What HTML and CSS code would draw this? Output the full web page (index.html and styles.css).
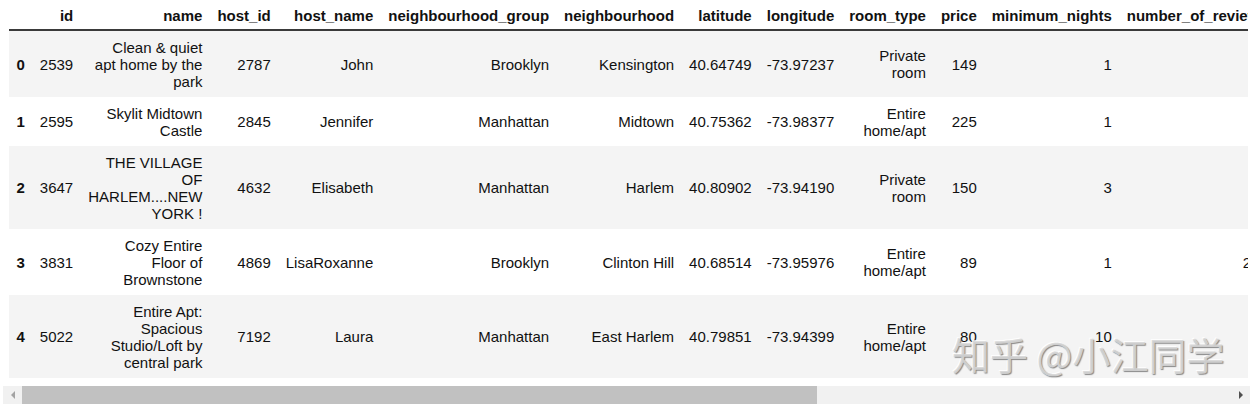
FILE: index.html
```html
<!DOCTYPE html>
<html>
<head>
<meta charset="utf-8">
<link rel="stylesheet" href="styles.css">
</head>
<body>
<div class="output">
  <div class="scroller">
    <table class="dataframe">
      <thead>
        <tr>
          <th></th><th>id</th><th>name</th><th>host_id</th><th>host_name</th><th>neighbourhood_group</th><th>neighbourhood</th><th>latitude</th><th>longitude</th><th>room_type</th><th>price</th><th>minimum_nights</th><th>number_of_reviews</th><th>last_review</th><th>reviews_per_month</th><th>calculated_host_listings_count</th><th>availability_365</th>
        </tr>
      </thead>
      <tbody>
        <tr>
          <th>0</th><td>2539</td><td>Clean &amp; quiet apt home by the park</td><td>2787</td><td>John</td><td>Brooklyn</td><td>Kensington</td><td>40.64749</td><td>-73.97237</td><td>Private room</td><td>149</td><td>1</td><td>9</td><td>2018-10-19</td><td>0.21</td><td>6</td><td>365</td>
        </tr>
        <tr>
          <th>1</th><td>2595</td><td>Skylit Midtown Castle</td><td>2845</td><td>Jennifer</td><td>Manhattan</td><td>Midtown</td><td>40.75362</td><td>-73.98377</td><td>Entire home/apt</td><td>225</td><td>1</td><td>45</td><td>2019-05-21</td><td>0.38</td><td>2</td><td>355</td>
        </tr>
        <tr>
          <th>2</th><td>3647</td><td>THE VILLAGE OF HARLEM....NEW YORK !</td><td>4632</td><td>Elisabeth</td><td>Manhattan</td><td>Harlem</td><td>40.80902</td><td>-73.94190</td><td>Private room</td><td>150</td><td>3</td><td>0</td><td>NaN</td><td>NaN</td><td>1</td><td>365</td>
        </tr>
        <tr>
          <th>3</th><td>3831</td><td>Cozy Entire Floor of Brownstone</td><td>4869</td><td>LisaRoxanne</td><td>Brooklyn</td><td>Clinton Hill</td><td>40.68514</td><td>-73.95976</td><td>Entire home/apt</td><td>89</td><td>1</td><td>270</td><td>2019-07-05</td><td>4.64</td><td>1</td><td>194</td>
        </tr>
        <tr>
          <th>4</th><td>5022</td><td>Entire Apt: Spacious Studio/Loft by central park</td><td>7192</td><td>Laura</td><td>Manhattan</td><td>East Harlem</td><td>40.79851</td><td>-73.94399</td><td>Entire home/apt</td><td>80</td><td>10</td><td>9</td><td>2018-11-19</td><td>0.10</td><td>1</td><td>0</td>
        </tr>
      </tbody>
    </table>
  </div>
  <div class="hscroll">
    <div class="arrow-btn left"><span class="tri-left"></span></div>
    <div class="thumb"></div>
    <div class="track"></div>
    <div class="arrow-btn right"><span class="tri-right"></span></div>
  </div>
</div>
<div class="watermark">知乎 @小江同学</div>
</body>
</html>
```

FILE: styles.css
```css
html, body {
  margin: 0;
  padding: 0;
  background: #ffffff;
}

body {
  font-family: "Liberation Sans", Arial, sans-serif;
  color: #000;
  position: relative;
  width: 1255px;
  height: 408px;
  overflow: hidden;
}

.output {
  display: flex;
  flex-direction: column;
  gap: 8px;
  width: 1250px;
}

.scroller {
  margin-left: 9px;
  width: 1239px;
  overflow: hidden;
}

.dataframe {
  border-collapse: collapse;
  border-spacing: 0;
  font-size: 15px;
  line-height: normal;
  color: #111;
}

.dataframe thead {
  border-bottom: 2px solid #3a3a3a;
}

.dataframe th,
.dataframe td {
  text-align: right;
  vertical-align: middle;
  padding: 7.5px 7.5px;
  white-space: normal;
}

.dataframe thead th {
  font-weight: bold;
  padding-top: 7px;
  padding-bottom: 5px;
}

.dataframe tbody th {
  font-weight: bold;
}

.dataframe tbody tr:nth-child(odd) {
  background: #f4f4f4;
}

.hscroll {
  display: flex;
  height: 18px;
  margin-left: 3px;
  background: #f1f1f1;
  width: 1247px;
}

.arrow-btn {
  width: 19px;
  display: flex;
  align-items: center;
  justify-content: center;
  background: #f1f1f1;
}

.thumb {
  width: 795px;
  background: #c1c1c1;
}

.track {
  flex: 1;
}

.tri-left {
  width: 0;
  height: 0;
  border-top: 4px solid transparent;
  border-bottom: 4px solid transparent;
  border-right: 4px solid #a3a3a3;
}

.tri-right {
  width: 0;
  height: 0;
  border-top: 4px solid transparent;
  border-bottom: 4px solid transparent;
  border-left: 4px solid #505050;
}

.watermark {
  position: absolute;
  left: 952px;
  top: 335px;
  font-family: "Noto Sans CJK SC", sans-serif;
  font-size: 38px;
  line-height: 1;
  color: rgba(215, 215, 215, 0.9);
  text-shadow: 1px 1px 1px rgba(110, 110, 110, 0.8), -1px -1px 0 rgba(255, 255, 255, 0.9);
  white-space: nowrap;
  pointer-events: none;
}
```
